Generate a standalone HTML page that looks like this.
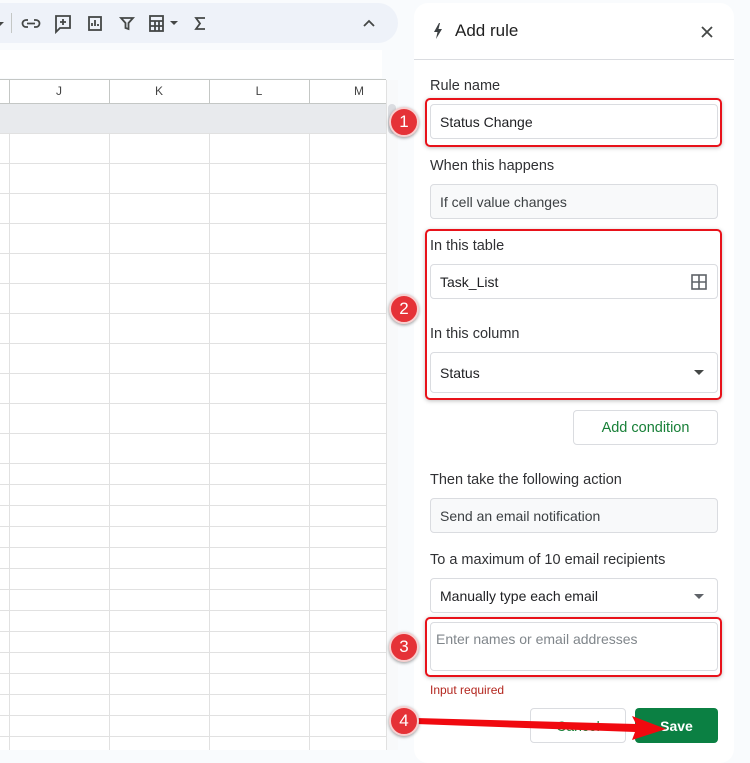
<!DOCTYPE html>
<html><head><meta charset="utf-8"><style>
*{box-sizing:border-box;margin:0;padding:0}
body{width:750px;height:750px;overflow:hidden;background:#f9fbfd;font-family:"Liberation Sans",Arial,sans-serif;position:relative;color:#1f1f1f}
.a{position:absolute}
.lbl{position:absolute;left:430px;font-size:14.5px;color:#303134;line-height:16px}
.inp{position:absolute;left:430px;width:288px;border:1px solid #dadce0;border-radius:4px;font-size:14px;color:#202124;padding-left:9px;display:flex;align-items:center;background:#fff}
.g{background:#f8f9fa;color:#3c4043}
.red{position:absolute;left:425px;width:297px;border:2px solid #e8121a;border-radius:5px;box-shadow:0 1px 4px rgba(0,0,0,.25)}
.c{position:absolute;width:30px;height:30px;border-radius:50%;background:#e53237;border:2px solid #f7d0d0;color:#fff;font-size:17px;display:flex;align-items:center;justify-content:center;box-shadow:0 1px 3px rgba(0,0,0,.4)}
.vl{position:absolute;top:80px;bottom:0;width:1px;background:#e1e1e1}
.hl{position:absolute;left:0;width:386px;height:1px;background:#e1e1e1}
.hd{position:absolute;top:84px;width:100px;text-align:center;font-size:12px;color:#444}
</style></head><body>
<div class="a" style="left:-20px;top:3px;width:418px;height:40px;background:#eef2f9;border-radius:20px"></div>
<div class="a" style="left:11px;top:13px;width:1px;height:20px;background:#c4c7c5"></div>
<svg class="a" style="left:0;top:12px" width="400" height="24" viewBox="0 0 400 24" fill="none" stroke="#444746" stroke-width="1.8">
<path d="M-4 10 l4 4 4-4" fill="#444746" stroke="none"/>
<path d="M28 8 h-2 a3.5 3.5 0 0 0 0 7 h2 M34 8 h2 a3.5 3.5 0 0 1 0 7 h-2 M27 11.5 h8"/>
<path d="M56 4 h14 v12 h-10 l-4 4z M63 7 v6 M60 10 h6"/>
<rect x="89" y="5" width="12" height="13"/><path d="M92 14 v-3 M95 14 v-6 M98 14 v-2"/>
<path d="M121 6 h12 l-4.5 5 v6 l-3-1 v-5z"/>
<rect x="150" y="4" width="13" height="15"/><path d="M150 9 h13 M150 14 h13 M155 9 v10 M159 9 v10"/>
<path d="M170 9 l4 4 4-4" fill="#444746" stroke="none"/>
<path d="M205 6 h-9 l4 5.5 -4 5.5 h9"/>
<path d="M364 14 l5-5 5 5"/>
</svg>
<div class="a" style="left:0;top:50px;width:382px;height:28px;background:#fff"></div>
<div class="a" style="left:0;top:80px;width:386px;height:670px;background:#fff"></div>
<div class="a" style="left:0;top:103px;width:386px;height:30px;background:#e8eaed"></div>
<div class="hl" style="top:79px;background:#c4c7c5"></div>
<div class="hl" style="top:103px;background:#c4c7c5"></div>
<div class="vl" style="left:9px;height:23px;background:#c4c7c5"></div><div class="vl" style="left:109px;height:23px;background:#c4c7c5"></div><div class="vl" style="left:209px;height:23px;background:#c4c7c5"></div><div class="vl" style="left:309px;height:23px;background:#c4c7c5"></div>
<div class="vl" style="left:9px;top:133px"></div><div class="vl" style="left:109px;top:133px"></div><div class="vl" style="left:209px;top:133px"></div><div class="vl" style="left:309px;top:133px"></div>
<div class="vl" style="left:386px;top:80px"></div>
<div class="a" style="left:387px;top:80px;width:11px;height:670px;background:#f8f9fa"></div>
<div class="a" style="left:388px;top:104px;width:8px;height:30px;background:#dadce0;border-radius:4px"></div>
<div class="hd" style="left:9px">J</div><div class="hd" style="left:109px">K</div><div class="hd" style="left:209px">L</div><div class="hd" style="left:309px">M</div>
<div class="hl" style="top:133px"></div><div class="hl" style="top:163px"></div><div class="hl" style="top:193px"></div><div class="hl" style="top:223px"></div><div class="hl" style="top:253px"></div><div class="hl" style="top:283px"></div><div class="hl" style="top:313px"></div><div class="hl" style="top:343px"></div><div class="hl" style="top:373px"></div><div class="hl" style="top:403px"></div><div class="hl" style="top:433px"></div><div class="hl" style="top:463px"></div>
<div class="hl" style="top:484px"></div><div class="hl" style="top:505px"></div><div class="hl" style="top:526px"></div><div class="hl" style="top:547px"></div><div class="hl" style="top:568px"></div><div class="hl" style="top:589px"></div><div class="hl" style="top:610px"></div><div class="hl" style="top:631px"></div><div class="hl" style="top:652px"></div><div class="hl" style="top:673px"></div><div class="hl" style="top:694px"></div><div class="hl" style="top:715px"></div><div class="hl" style="top:736px"></div>
<div class="a" style="left:414px;top:3px;width:320px;height:760px;background:#fff;border-radius:14px"></div>
<div class="a" style="left:414px;top:59px;width:320px;height:1px;background:#dadce0"></div>
<svg class="a" style="left:433px;top:23px" width="10" height="16" viewBox="0 0 10 16"><path d="M6 0 L1 9 h3.5 L3 16 L9 6 H5.5 L7 0z" fill="#3c4043"/></svg>
<div class="a" style="left:455px;top:21px;font-size:17px;color:#1f1f1f">Add rule</div>
<svg class="a" style="left:700px;top:25px" width="14" height="14" viewBox="0 0 14 14" stroke="#444746" stroke-width="1.8"><path d="M2 2 L12 12 M12 2 L2 12"/></svg>

<div class="lbl" style="top:78px">Rule name</div>
<div class="red" style="top:98px;height:49px"></div>
<div class="inp" style="top:104px;height:35px">Status Change</div>
<div class="lbl" style="top:158px">When this happens</div>
<div class="inp g" style="top:184px;height:35px">If cell value changes</div>

<div class="red" style="top:229px;height:171px"></div>
<div class="lbl" style="top:238px">In this table</div>
<div class="inp" style="top:264px;height:35px">Task_List</div>
<svg class="a" style="left:691px;top:274px" width="16" height="16" viewBox="0 0 16 16" fill="none" stroke="#5f6368" stroke-width="1.6"><rect x="1" y="1" width="14" height="14"/><path d="M8 1v14M1 8h14"/></svg>
<div class="lbl" style="top:326px">In this column</div>
<div class="inp" style="top:352px;height:41px">Status</div>
<svg class="a" style="left:694px;top:370px" width="10" height="6"><path d="M0 0h10L5 5z" fill="#444746"/></svg>

<div class="a" style="left:573px;top:410px;width:145px;height:35px;border:1px solid #dadce0;border-radius:4px;color:#188038;font-size:14.5px;display:flex;align-items:center;justify-content:center">Add condition</div>

<div class="lbl" style="top:472px">Then take the following action</div>
<div class="inp g" style="top:498px;height:35px">Send an email notification</div>
<div class="lbl" style="top:552px">To a maximum of 10 email recipients</div>
<div class="inp" style="top:578px;height:35px">Manually type each email</div>
<svg class="a" style="left:694px;top:594px" width="10" height="6"><path d="M0 0h10L5 5z" fill="#5f6368"/></svg>

<div class="red" style="top:617px;height:60px"></div>
<div class="inp" style="top:622px;height:49px;align-items:flex-start;padding-left:5px;padding-top:8px;color:#80868b">Enter names or email addresses</div>
<div class="a" style="left:430px;top:683px;font-size:12px;color:#b3261e">Input required</div>

<div class="a" style="left:530px;top:708px;width:96px;height:35px;border:1px solid #dadce0;border-radius:4px;font-size:14px;color:#188038;display:flex;align-items:center;justify-content:center">Cancel</div>
<div class="a" style="left:635px;top:708px;width:83px;height:35px;background:#0b8043;border-radius:4px;font-size:14px;font-weight:bold;color:#fff;display:flex;align-items:center;justify-content:center">Save</div>

<svg class="a" style="left:0;top:0" width="750" height="750"><path d="M416 718 L636 724 L632 716 L666 729 L632 740 L635 732 L416 724z" fill="#f0090f"/></svg>

<div class="c" style="left:389px;top:107px">1</div>
<div class="c" style="left:389px;top:294px">2</div>
<div class="c" style="left:389px;top:632px">3</div>
<div class="c" style="left:389px;top:706px">4</div>
</body></html>
